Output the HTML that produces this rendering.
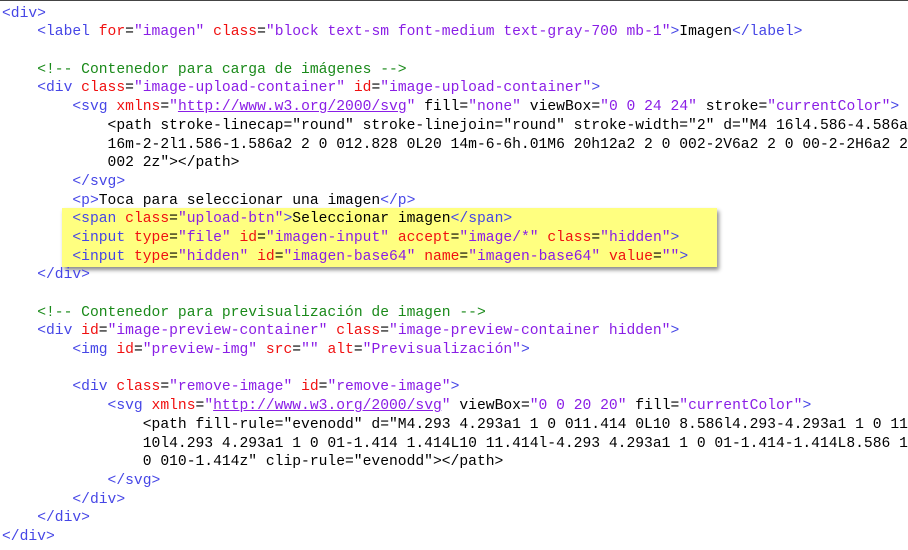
<!DOCTYPE html>
<html><head><meta charset="utf-8"><style>
html,body{margin:0;padding:0;background:#fff;width:908px;height:550px;overflow:hidden;position:relative}
#top{position:absolute;left:0;top:0;width:908px;height:1px;background:#444}
#code{position:absolute;left:2px;top:4.7px;font-family:"Liberation Mono",monospace;font-size:14.67px;line-height:18.68px;white-space:pre;color:#000}
.t{color:#4646e6}.a{color:#f01010}.v{color:#8a1ee6}.c{color:#1a8a1a}.u{text-decoration:underline}
#hl{position:absolute;left:62px;top:208px;width:655px;height:59px;background:#ffff80;box-shadow:2px 3px 4px rgba(0,0,0,.45)}
#hl .t{color:#3a3aa0}#hl .v{color:#800080}
</style></head><body>
<div id="top"></div>
<div id="hl"></div>
<div id="code"><span class="t">&lt;div&gt;</span>
    <span class="t">&lt;label</span> <span class="a">for</span>=<span class="v">"imagen"</span> <span class="a">class</span>=<span class="v">"block text-sm font-medium text-gray-700 mb-1"</span><span class="t">&gt;</span>Imagen<span class="t">&lt;/label&gt;</span>

    <span class="c">&lt;!-- Contenedor para carga de imágenes --&gt;</span>
    <span class="t">&lt;div</span> <span class="a">class</span>=<span class="v">"image-upload-container"</span> <span class="a">id</span>=<span class="v">"image-upload-container"</span><span class="t">&gt;</span>
        <span class="t">&lt;svg</span> <span class="a">xmlns</span>=<span class="v">"<span class="u">http://www.w3.org/2000/svg</span>"</span> fill=<span class="v">"none"</span> viewBox=<span class="v">"0 0 24 24"</span> stroke=<span class="v">"currentColor"</span><span class="t">&gt;</span>
            &lt;path stroke-linecap="round" stroke-linejoin="round" stroke-width="2" d="M4 16l4.586-4.586a
            16m-2-2l1.586-1.586a2 2 0 012.828 0L20 14m-6-6h.01M6 20h12a2 2 0 002-2V6a2 2 0 00-2-2H6a2 2 0
            002 2z"&gt;&lt;/path&gt;
        <span class="t">&lt;/svg&gt;</span>
        <span class="t">&lt;p&gt;</span>Toca para seleccionar una imagen<span class="t">&lt;/p&gt;</span>
        <span class="t">&lt;span</span> <span class="a">class</span>=<span class="v">"upload-btn"</span><span class="t">&gt;</span>Seleccionar imagen<span class="t">&lt;/span&gt;</span>
        <span class="t">&lt;input</span> <span class="a">type</span>=<span class="v">"file"</span> <span class="a">id</span>=<span class="v">"imagen-input"</span> <span class="a">accept</span>=<span class="v">"image/*"</span> <span class="a">class</span>=<span class="v">"hidden"</span><span class="t">&gt;</span>
        <span class="t">&lt;input</span> <span class="a">type</span>=<span class="v">"hidden"</span> <span class="a">id</span>=<span class="v">"imagen-base64"</span> <span class="a">name</span>=<span class="v">"imagen-base64"</span> <span class="a">value</span>=<span class="v">""</span><span class="t">&gt;</span>
    <span class="t">&lt;/div&gt;</span>

    <span class="c">&lt;!-- Contenedor para previsualización de imagen --&gt;</span>
    <span class="t">&lt;div</span> <span class="a">id</span>=<span class="v">"image-preview-container"</span> <span class="a">class</span>=<span class="v">"image-preview-container hidden"</span><span class="t">&gt;</span>
        <span class="t">&lt;img</span> <span class="a">id</span>=<span class="v">"preview-img"</span> <span class="a">src</span>=<span class="v">""</span> <span class="a">alt</span>=<span class="v">"Previsualización"</span><span class="t">&gt;</span>

        <span class="t">&lt;div</span> <span class="a">class</span>=<span class="v">"remove-image"</span> <span class="a">id</span>=<span class="v">"remove-image"</span><span class="t">&gt;</span>
            <span class="t">&lt;svg</span> <span class="a">xmlns</span>=<span class="v">"<span class="u">http://www.w3.org/2000/svg</span>"</span> viewBox=<span class="v">"0 0 20 20"</span> fill=<span class="v">"currentColor"</span><span class="t">&gt;</span>
                &lt;path fill-rule="evenodd" d="M4.293 4.293a1 1 0 011.414 0L10 8.586l4.293-4.293a1 1 0 11
                10l4.293 4.293a1 1 0 01-1.414 1.414L10 11.414l-4.293 4.293a1 1 0 01-1.414-1.414L8.586 1
                0 010-1.414z" clip-rule="evenodd"&gt;&lt;/path&gt;
            <span class="t">&lt;/svg&gt;</span>
        <span class="t">&lt;/div&gt;</span>
    <span class="t">&lt;/div&gt;</span>
<span class="t">&lt;/div&gt;</span></div>
</body></html>
